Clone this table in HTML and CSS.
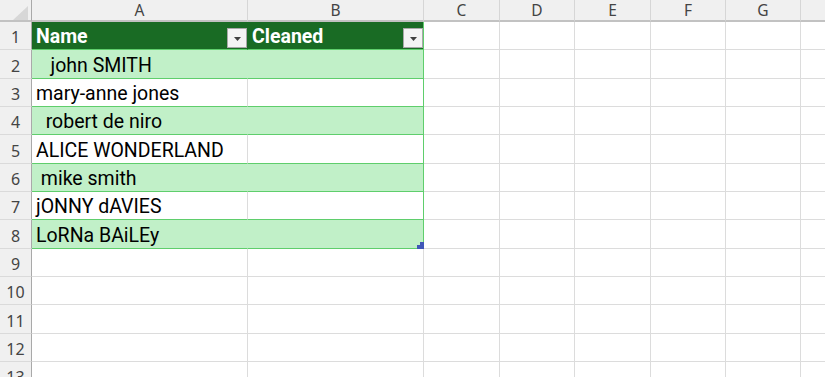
FILE: index.html
```html
<!DOCTYPE html>
<html lang="en">
<head>
<meta charset="utf-8">
<title>Sheet</title>
<link rel="stylesheet" href="styles.css">
</head>
<body>
<div class="sheet">
  <!-- column headers -->
  <div class="ch corner"><svg class="selall" width="16" height="14" viewBox="0 0 16 14"><polygon points="15,0 15,14 0,14" fill="#d7d7d7"/></svg></div>
  <div class="ch">A</div>
  <div class="ch">B</div>
  <div class="ch">C</div>
  <div class="ch">D</div>
  <div class="ch">E</div>
  <div class="ch">F</div>
  <div class="ch">G</div>
  <div class="ch last"></div>

  <!-- row 1 -->
  <div class="rh">1</div>
  <div class="c th tha"><span class="txt">Name</span><span class="dd"><svg width="7" height="4" viewBox="0 0 7 4"><polygon points="0,0 7,0 3.5,4" fill="#404040"/></svg></span></div>
  <div class="c th thb"><span class="txt">Cleaned</span><span class="dd"><svg width="7" height="4" viewBox="0 0 7 4"><polygon points="0,0 7,0 3.5,4" fill="#404040"/></svg></span></div>
  <div class="c"></div><div class="c"></div><div class="c"></div><div class="c"></div><div class="c"></div><div class="c last"></div>

  <!-- row 2 -->
  <div class="rh">2</div>
  <div class="c band a"><span class="txt">   john SMITH</span></div>
  <div class="c band b"></div>
  <div class="c"></div><div class="c"></div><div class="c"></div><div class="c"></div><div class="c"></div><div class="c last"></div>

  <!-- row 3 -->
  <div class="rh">3</div>
  <div class="c plain a"><span class="txt">mary-anne jones</span></div>
  <div class="c plain b"></div>
  <div class="c"></div><div class="c"></div><div class="c"></div><div class="c"></div><div class="c"></div><div class="c last"></div>

  <!-- row 4 -->
  <div class="rh">4</div>
  <div class="c band a"><span class="txt">  robert de niro</span></div>
  <div class="c band b"></div>
  <div class="c"></div><div class="c"></div><div class="c"></div><div class="c"></div><div class="c"></div><div class="c last"></div>

  <!-- row 5 -->
  <div class="rh">5</div>
  <div class="c plain a"><span class="txt">ALICE WONDERLAND</span></div>
  <div class="c plain b"></div>
  <div class="c"></div><div class="c"></div><div class="c"></div><div class="c"></div><div class="c"></div><div class="c last"></div>

  <!-- row 6 -->
  <div class="rh">6</div>
  <div class="c band a"><span class="txt"> mike smith</span></div>
  <div class="c band b"></div>
  <div class="c"></div><div class="c"></div><div class="c"></div><div class="c"></div><div class="c"></div><div class="c last"></div>

  <!-- row 7 -->
  <div class="rh">7</div>
  <div class="c plain a"><span class="txt">jONNY dAVIES</span></div>
  <div class="c plain b"></div>
  <div class="c"></div><div class="c"></div><div class="c"></div><div class="c"></div><div class="c"></div><div class="c last"></div>

  <!-- row 8 -->
  <div class="rh">8</div>
  <div class="c band a"><span class="txt">LoRNa BAiLEy</span></div>
  <div class="c band b handle-cell"><svg class="handle" width="7" height="7" viewBox="0 0 7 7"><polygon points="3,0 7,0 7,7 0,7 0,3 3,3" fill="#4157b8"/></svg></div>
  <div class="c"></div><div class="c"></div><div class="c"></div><div class="c"></div><div class="c"></div><div class="c last"></div>

  <!-- rows 9-12 -->
  <div class="rh">9</div>
  <div class="c"></div><div class="c"></div><div class="c"></div><div class="c"></div><div class="c"></div><div class="c"></div><div class="c"></div><div class="c last"></div>
  <div class="rh">10</div>
  <div class="c"></div><div class="c"></div><div class="c"></div><div class="c"></div><div class="c"></div><div class="c"></div><div class="c"></div><div class="c last"></div>
  <div class="rh">11</div>
  <div class="c"></div><div class="c"></div><div class="c"></div><div class="c"></div><div class="c"></div><div class="c"></div><div class="c"></div><div class="c last"></div>
  <div class="rh">12</div>
  <div class="c"></div><div class="c"></div><div class="c"></div><div class="c"></div><div class="c"></div><div class="c"></div><div class="c"></div><div class="c last"></div>
  <div class="rh">13</div>
  <div class="c"></div><div class="c"></div><div class="c"></div><div class="c"></div><div class="c"></div><div class="c"></div><div class="c"></div><div class="c last"></div>
</div>
</body>
</html>
```

FILE: styles.css
```css
* { box-sizing: border-box; }
html, body {
  margin: 0;
  padding: 0;
  background: #ffffff;
  overflow: hidden;
  width: 825px;
  height: 377px;
}
.sheet {
  display: grid;
  grid-template-columns: 32px 216px 176px 76px 75px 76px 75px 75px 1fr;
  grid-template-rows: 22px 28px 29px 28px 28px 29px 28px 28px 29px 28px 28px 29px 28px 28px;
  width: 825px;
}
.ch {
  background: #f0f0f0;
  border-right: 1px solid #d6d6d6;
  border-bottom: 2px solid #c2c2c2;
  font-family: "Noto Sans", "Open Sans", sans-serif;
  font-size: 15.5px;
  color: #444444;
  display: flex;
  align-items: flex-end;
  justify-content: center;
  line-height: 20px;
}
.ch.corner {
  border-right: 1px solid #a9a9a9;
  justify-content: flex-end;
  align-items: flex-end;
  padding: 0 2px 0 0;
}
.selall { display: block; }
.ch.last { border-right: none; }
.rh {
  background: #f0f0f0;
  border-right: 1px solid #a9a9a9;
  border-bottom: 1px solid #dadada;
  font-family: "Noto Sans", "Open Sans", sans-serif;
  font-size: 16px;
  color: #444444;
  display: flex;
  align-items: flex-end;
  justify-content: center;
  line-height: 22px;
  padding-bottom: 1px;
}
.c {
  border-right: 1px solid #dcdcdc;
  border-bottom: 1px solid #dcdcdc;
  font-family: Roboto, "Liberation Sans", sans-serif;
  font-size: 19.5px;
  color: #000000;
  display: flex;
  align-items: flex-end;
  line-height: 23px;
  padding: 0 0 1px 4px;
  white-space: pre;
  overflow: hidden;
}
.c.last { border-right: none; }
.th {
  background: #196b24;
  color: #ffffff;
  font-weight: 700;
  border-bottom-color: #5fce6c;
  justify-content: space-between;
}
.tha { border-right-color: #196b24; }
.thb { border-right-color: #5fce6c; }
.dd {
  width: 20px;
  height: 20px;
  background: #f4f4f4;
  border: 1px solid #a8a8a8;
  display: flex;
  align-items: center;
  justify-content: center;
  align-self: flex-end;
}
.dd svg { display: block; margin-top: 1px; }
.band {
  background: #c1f0c8;
  border-bottom-color: #5fce6c;
}
.band.a { border-right-color: #c1f0c8; }
.plain { border-bottom-color: #5fce6c; }
.b { border-right-color: #5fce6c; }
.handle-cell { position: relative; overflow: visible; }
.handle {
  position: absolute;
  right: -1px;
  bottom: -1px;
  display: block;
}
```
